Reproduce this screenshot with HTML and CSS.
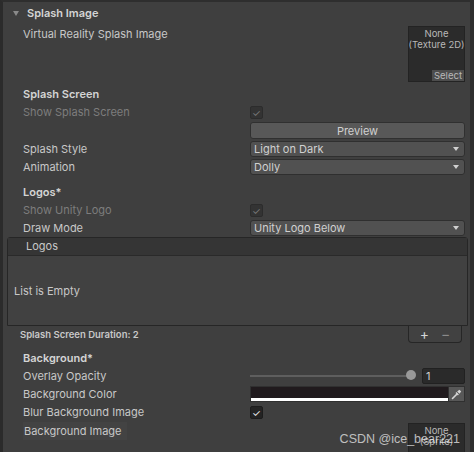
FILE: index.html
```html
<!DOCTYPE html>
<html lang="en">
<head>
    <meta charset="UTF-8">
    <title>Splash Image</title>
    <link rel="stylesheet" href="styles.css">
</head>
<body>
    <div class="inspector">
        <div class="foldout">
            <span class="fold-arrow"></span>
            <span>Splash Image</span>
        </div>

        <div class="row tex-row">
            <span class="label">Virtual Reality Splash Image</span>
            <div class="texture-box">
                <span>None</span>
                <span>(Texture 2D)</span>
                <span class="select-btn">Select</span>
            </div>
        </div>

        <div class="row section-title">Splash Screen</div>
        <div class="row">
            <span class="label disabled">Show Splash Screen</span>
            <span class="checkbox disabled-box">&#10003;</span>
        </div>
        <div class="row button-row">
            <span class="label"></span>
            <button class="preview-btn">Preview</button>
        </div>
        <div class="row">
            <span class="label">Splash Style</span>
            <div class="dropdown">Light on Dark</div>
        </div>
        <div class="row">
            <span class="label">Animation</span>
            <div class="dropdown">Dolly</div>
        </div>

        <div class="row section-title gap-top">Logos*</div>
        <div class="row">
            <span class="label disabled">Show Unity Logo</span>
            <span class="checkbox disabled-box">&#10003;</span>
        </div>
        <div class="row">
            <span class="label">Draw Mode</span>
            <div class="dropdown">Unity Logo Below</div>
        </div>

        <div class="list">
            <div class="list-header">Logos</div>
            <div class="list-body">List is Empty</div>
        </div>
        <div class="list-footer">
            <span class="duration">Splash Screen Duration: 2</span>
            <div class="add-remove">
                <span>+</span>
                <span class="minus">&minus;</span>
            </div>
        </div>

        <div class="row section-title gap-small">Background*</div>
        <div class="row">
            <span class="label">Overlay Opacity</span>
            <div class="slider">
                <div class="track"><span class="knob"></span></div>
                <div class="number-field">1</div>
            </div>
        </div>
        <div class="row">
            <span class="label">Background Color</span>
            <div class="color-field">
                <div class="swatch"><div class="alpha"></div></div>
                <div class="picker">
                    <svg width="11" height="11" viewBox="0 0 11 11">
                        <path d="M1.5 9.5 L6 5" stroke="#d6d6d6" stroke-width="1.6" stroke-linecap="round"/>
                        <path d="M6.2 2.6 L8.4 0.8 L10.2 2.6 L8.4 4.8 Z" fill="#d6d6d6"/>
                        <path d="M5 3.6 L7.4 6" stroke="#d6d6d6" stroke-width="1.4"/>
                    </svg>
                </div>
            </div>
        </div>
        <div class="row">
            <span class="label">Blur Background Image</span>
            <span class="checkbox on">&#10003;</span>
        </div>
        <div class="row tex-row last">
            <span class="label indent">Background Image</span>
            <div class="texture-box">
                <span>None</span>
                <span>(Sprite)</span>
            </div>
        </div>

        <div class="watermark">CSDN @ice_bear221</div>
    </div>
</body>
</html>
```

FILE: styles.css
```css
body {
    margin: 0;
    background: #3f3f3f;
    font-family: Inter, "Noto Sans", sans-serif;
    font-size: 11px;
    color: #c8c8c8;
    overflow: hidden;
}
.inspector {
    position: relative;
    height: 452px;
    box-sizing: border-box;
    border-left: 3px solid #2b2b2b;
    border-top: 2px solid #2e2e2e;
    border-right: 4px solid #2e2e2e;
    padding: 2px 2px 0 20px;
    background: #3f3f3f;
}
.foldout {
    height: 18px;
    display: flex;
    align-items: center;
    font-weight: 600;
    color: #d4d4d4;
    margin-left: -10px;
}
.fold-arrow {
    width: 0;
    height: 0;
    border-left: 3px solid transparent;
    border-right: 3px solid transparent;
    border-top: 5px solid #8a8a8a;
    margin-right: 7px;
}
.foldout span:last-child {
    margin-left: 1px;
}
.row {
    display: flex;
    align-items: center;
    height: 18px;
}
.button-row {
    height: 19px;
}
.label {
    width: 227px;
    flex-shrink: 0;
    white-space: nowrap;
}
.label.indent {
    padding-left: 1px;
}
.disabled {
    color: #7d7d7d;
}
.section-title {
    font-weight: 600;
    color: #d4d4d4;
}
.gap-top {
    margin-top: 7px;
}
.gap-small {
    margin-top: 5px;
}
.tex-row {
    height: 60px;
    align-items: flex-start;
    margin-top: 3px;
}
.tex-row .label {
    line-height: 18px;
}
.tex-row.last {
    margin-top: 1px;
    height: 30px;
}
.tex-row.last .label {
    background: #434343;
    width: auto;
    padding: 0 5px 0 1px;
    margin-right: auto;
}
.tex-row.last .texture-box {
    margin-left: auto;
    margin-right: 3px;
    height: 40px;
}
.texture-box {
    margin-left: 158px;
    margin-top: 1px;
    width: 57px;
    height: 56px;
    box-sizing: border-box;
    background: #2b2b2b;
    border: 1px solid #232323;
    position: relative;
    display: flex;
    flex-direction: column;
    align-items: center;
    font-size: 9.5px;
    line-height: 11px;
    color: #b8b8b8;
    padding-top: 1px;
    white-space: nowrap;
}
.select-btn {
    position: absolute;
    right: 0;
    bottom: 0;
    background: #4d4d4d;
    padding: 0 2px;
    font-size: 9.5px;
    line-height: 11px;
}
.checkbox {
    width: 13px;
    height: 13px;
    box-sizing: border-box;
    border-radius: 2px;
    font-size: 10px;
    line-height: 12px;
    text-align: center;
}
.disabled-box {
    background: #333333;
    border: 1px solid #2c2c2c;
    color: #7a7a7a;
}
.checkbox.on {
    background: #232323;
    border: 1px solid #1c1c1c;
    color: #f0f0f0;
}
.preview-btn {
    width: 215px;
    height: 17px;
    padding: 0;
    font-family: inherit;
    font-size: 11px;
    color: #d0d0d0;
    background: #585858;
    border: 1px solid #303030;
    border-radius: 3px;
}
.dropdown {
    width: 215px;
    height: 16px;
    box-sizing: border-box;
    background: #515151;
    border: 1px solid #2f2f2f;
    border-radius: 3px;
    padding-left: 3px;
    line-height: 14px;
    color: #d0d0d0;
    position: relative;
}
.dropdown::after {
    content: "";
    position: absolute;
    right: 5px;
    top: 5px;
    border-left: 3.5px solid transparent;
    border-right: 3.5px solid transparent;
    border-top: 4px solid #d0d0d0;
}
.list {
    margin: 0 0 0 -16px;
    border: 1px solid #262626;
    border-radius: 3px 3px 0 0;
}
.list-header {
    height: 17px;
    line-height: 17px;
    background: #353535;
    padding-left: 18px;
    border-bottom: 1px solid #2a2a2a;
    color: #c8c8c8;
}
.list-body {
    height: 69px;
    background: #414141;
    padding-left: 6px;
    display: flex;
    align-items: center;
    box-sizing: border-box;
}
.list-footer {
    display: flex;
    justify-content: space-between;
    height: 18px;
}
.duration {
    font-size: 9.5px;
    font-weight: 600;
    color: #c8c8c8;
    margin-left: -3px;
    line-height: 17px;
}
.add-remove {
    width: 54px;
    height: 17px;
    box-sizing: border-box;
    background: #414141;
    border: 1px solid #262626;
    border-top: none;
    border-radius: 0 0 4px 4px;
    display: flex;
    justify-content: center;
    gap: 12px;
    font-size: 14px;
    line-height: 15px;
    color: #d6d6d6;
    margin-right: 6px;
}
.add-remove .minus {
    color: #8a8a8a;
}
.slider {
    width: 215px;
    display: flex;
    align-items: center;
}
.track {
    width: 163px;
    height: 2px;
    background: #5e5e5e;
    position: relative;
}
.knob {
    position: absolute;
    right: -3px;
    top: -5px;
    width: 10px;
    height: 10px;
    border-radius: 50%;
    background: #999999;
}
.number-field {
    margin-left: auto;
    width: 43px;
    height: 16px;
    box-sizing: border-box;
    background: #2a2a2a;
    border: 1px solid #212121;
    border-radius: 2px;
    padding-left: 3px;
    line-height: 14px;
    color: #d0d0d0;
}
.color-field {
    width: 215px;
    height: 16px;
    display: flex;
}
.swatch {
    flex: 1;
    background: #201a1d;
    border: 1px solid #303030;
    display: flex;
    flex-direction: column;
    justify-content: flex-end;
}
.alpha {
    height: 3px;
    background: #ffffff;
}
.picker {
    width: 15px;
    background: #585858;
    border: 1px solid #303030;
    border-left: none;
    display: flex;
    align-items: center;
    justify-content: center;
}
.watermark {
    position: absolute;
    right: 10px;
    bottom: 6px;
    font-family: "Liberation Sans", Arial, sans-serif;
    font-size: 12.5px;
    color: rgba(235, 235, 235, 0.75);
}
```
